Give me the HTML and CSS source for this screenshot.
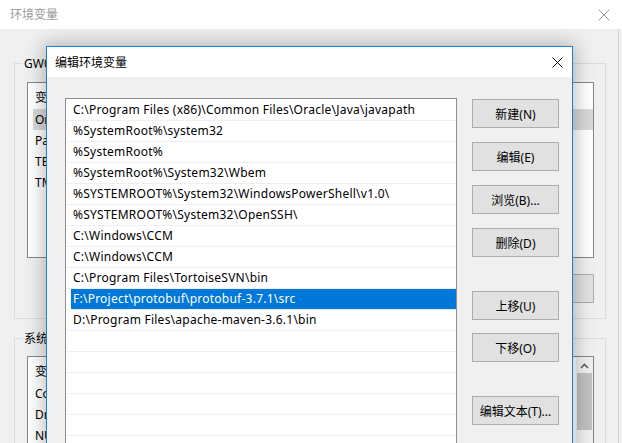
FILE: index.html
```html
<!DOCTYPE html>
<html lang="zh-CN">
<head>
<meta charset="utf-8">
<title>编辑环境变量</title>
<link rel="stylesheet" href="styles.css">
</head>
<body>
<div class="bgwin">
  <div class="bg-title">
    <span>环境变量</span>
    <svg class="bg-close" width="12" height="12" viewBox="0 0 12 12"><path d="M0.5 0.5L11.5 11.5M11.5 0.5L0.5 11.5" stroke="#9a9a9a" stroke-width="1" fill="none"/></svg>
  </div>
  <div class="bg-body">
    <div class="group g1">
      <span class="legend">GW001 的用户变量(U)</span>
      <div class="vlist l1">
        <div class="vrow head"><span>变量</span></div>
        <div class="vrow sel"><span>OneDrive</span></div>
        <div class="vrow"><span>Path</span></div>
        <div class="vrow"><span>TEMP</span></div>
        <div class="vrow"><span>TMP</span></div>
      </div>
      <div class="bg-btns">
        <div class="bg-btn">新建(N)...</div>
        <div class="bg-btn">编辑(E)...</div>
        <div class="bg-btn">删除(D)</div>
      </div>
    </div>
    <div class="group g2">
      <span class="legend">系统变量(S)</span>
      <div class="vlist l2">
        <div class="vcol">
          <div class="vrow head"><span>变量</span></div>
          <div class="vrow"><span>ComSpec</span></div>
          <div class="vrow"><span>DriverData</span></div>
          <div class="vrow"><span>NUMBER_OF_PROCESSORS</span></div>
        </div>
        <div class="scroll">
          <svg class="arrow" width="9" height="6" viewBox="0 0 9 6"><path d="M1 5L4.5 1.5L8 5" stroke="#606060" stroke-width="1.6" fill="none"/></svg>
          <div class="thumb"></div>
        </div>
      </div>
    </div>
  </div>
  <div class="edge"></div>
</div>

<div class="dialog">
  <div class="d-title">
    <span>编辑环境变量</span>
    <svg width="11" height="11" viewBox="0 0 11 11"><path d="M0.5 0.5L10.5 10.5M10.5 0.5L0.5 10.5" stroke="#000" stroke-width="1" fill="none"/></svg>
  </div>
  <div class="d-body">
    <div class="plist">
      <div class="prow"><span class="cell">C:\Program Files (x86)\Common Files\Oracle\Java\javapath</span></div>
      <div class="prow"><span class="cell">%SystemRoot%\system32</span></div>
      <div class="prow"><span class="cell">%SystemRoot%</span></div>
      <div class="prow"><span class="cell">%SystemRoot%\System32\Wbem</span></div>
      <div class="prow"><span class="cell">%SYSTEMROOT%\System32\WindowsPowerShell\v1.0\</span></div>
      <div class="prow"><span class="cell">%SYSTEMROOT%\System32\OpenSSH\</span></div>
      <div class="prow"><span class="cell">C:\Windows\CCM</span></div>
      <div class="prow"><span class="cell">C:\Windows\CCM</span></div>
      <div class="prow"><span class="cell">C:\Program Files\TortoiseSVN\bin</span></div>
      <div class="prow selected"><span class="cell">F:\Project\protobuf\protobuf-3.7.1\src</span></div>
      <div class="prow"><span class="cell">D:\Program Files\apache-maven-3.6.1\bin</span></div>
      <div class="prow"><span class="cell"></span></div>
      <div class="prow"><span class="cell"></span></div>
      <div class="prow"><span class="cell"></span></div>
      <div class="prow"><span class="cell"></span></div>
      <div class="prow"><span class="cell"></span></div>
      <div class="prow"><span class="cell"></span></div>
      <div class="prow"><span class="cell"></span></div>
    </div>
    <div class="btns">
      <div class="btn b1">新建(N)</div>
      <div class="btn">编辑(E)</div>
      <div class="btn">浏览(B)...</div>
      <div class="btn">删除(D)</div>
      <div class="btn gap">上移(U)</div>
      <div class="btn">下移(O)</div>
      <div class="btn gap2">编辑文本(T)...</div>
    </div>
  </div>
</div>
</body>
</html>
```

FILE: styles.css
```css
* { box-sizing: border-box; }
html, body {
  margin: 0;
  padding: 0;
}
body {
  width: 622px;
  height: 443px;
  overflow: hidden;
  position: relative;
  background: #f0f0f0;
  font-family: "Noto Sans", "Noto Sans CJK SC", sans-serif;
  font-size: 12px;
  color: #000;
}

/* background window */
.bgwin {
  position: relative;
  height: 443px;
}
.bg-title {
  height: 29px;
  background: #fff;
  display: flex;
  align-items: center;
  justify-content: space-between;
  padding: 0 12px 2px 10px;
  color: #9a9a9a;
  font-size: 12px;
}
.bg-close { margin-top: 2px; }
.bg-body {
  padding: 34px 16px 0 14px;
}
.group {
  position: relative;
  border: 1px solid #dcdcdc;
  padding: 18px 11px 0 12px;
}
.g1 { height: 256px; }
.g2 { height: 120px; margin-top: 19px; padding-top: 17px; }
.legend {
  position: absolute;
  top: -10px;
  left: 7px;
  padding: 0 2px;
  background: #f0f0f0;
  white-space: nowrap;
}
.vlist {
  background: #fff;
  border: 1px solid #828790;
}
.l1 { height: 176px; padding: 4px 0 0 5px; }
.l2 { height: 100px; display: flex; padding: 4px 0 0 5px; }
.vcol { flex: 1; }
.vrow {
  height: 21px;
  line-height: 21px;
  padding-left: 2px;
  white-space: nowrap;
}
.vrow.head { height: 22px; }
.vrow.sel { background: #d9d9d9; }
.scroll {
  width: 17px;
  background: #f0f0f0;
  margin: -4px 0 0 0;
  display: flex;
  flex-direction: column;
  align-items: center;
}
.arrow { margin-top: 6px; }
.thumb {
  width: 15px;
  height: 57px;
  margin-top: 4px;
  background: #c1c1c1;
}
.bg-btns {
  display: flex;
  justify-content: flex-end;
  gap: 8px;
  margin-top: 16px;
}
.bg-btn {
  width: 92px;
  height: 29px;
  border: 1px solid #adadad;
  background: #e1e1e1;
  display: flex;
  align-items: center;
  justify-content: center;
  white-space: nowrap;
  overflow: hidden;
}
.edge {
  position: absolute;
  top: 29px;
  bottom: 0;
  right: 3px;
  border-left: 1px solid #d4d4d4;
}

/* dialog */
.dialog {
  position: absolute;
  left: 46px;
  top: 46px;
  width: 527px;
  height: 420px;
  border: 1px solid #1a82d6;
  background: #f0f0f0;
  box-shadow: 0 0 18px 2px rgba(0, 0, 0, 0.28);
}
.d-title {
  height: 30px;
  background: #fff;
  display: flex;
  align-items: center;
  justify-content: space-between;
  padding: 0 9px 0 8px;
  font-size: 12px;
}
.d-body {
  display: flex;
  align-items: flex-start;
  padding: 21px 0 0 18px;
}
.plist {
  width: 392px;
  height: 360px;
  background: #fff;
  border: 1px solid #8f8f8f;
  padding: 1px 0 0 1px;
}
.prow {
  height: 21px;
  border-bottom: 1px solid #efefef;
  display: flex;
}
.cell {
  flex: 1;
  margin-left: 4px;
  padding-left: 2px;
  line-height: 20px;
  letter-spacing: 0.24px;
  white-space: nowrap;
  overflow: hidden;
}
.prow.selected .cell {
  background: #0078d7;
  color: #fff;
}
.btns {
  margin-left: 15px;
  padding-top: 1px;
  display: flex;
  flex-direction: column;
}
.btn {
  width: 87px;
  height: 29px;
  margin-bottom: 14px;
  border: 1px solid #adadad;
  background: #e1e1e1;
  display: flex;
  align-items: center;
  justify-content: center;
  white-space: nowrap;
}
.btn.gap { margin-top: 20px; margin-bottom: 13px; }
.btn.gap2 { margin-top: 20px; }
```
